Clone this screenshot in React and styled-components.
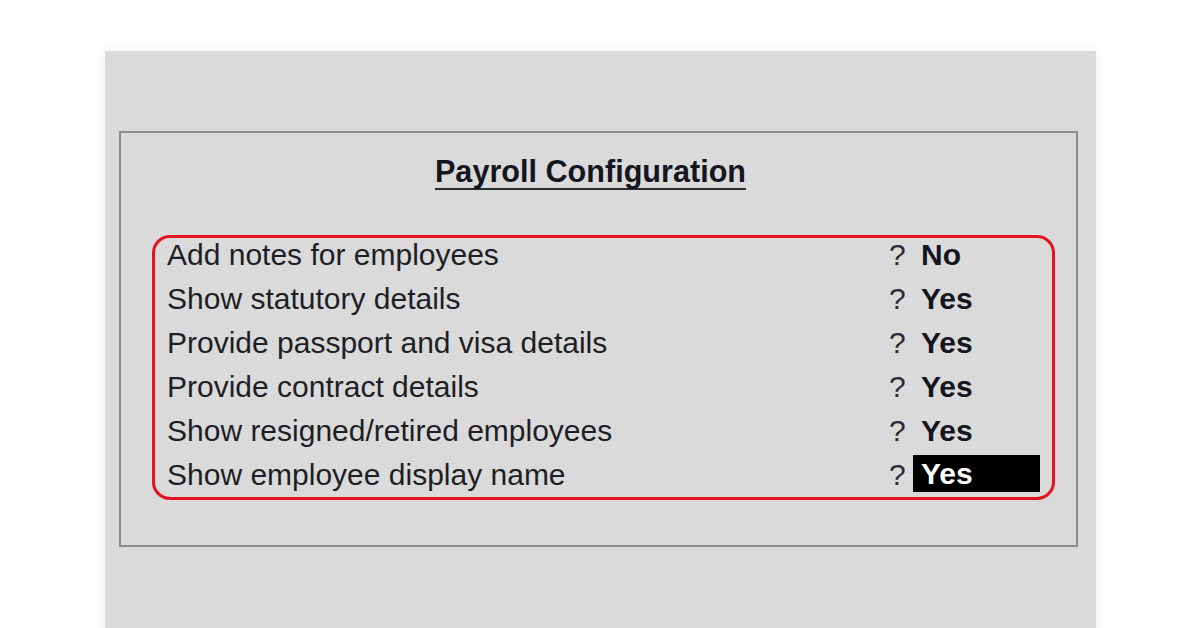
import styled, { createGlobalStyle } from 'styled-components';

const GlobalStyle = createGlobalStyle`
  html, body {
    margin: 0;
    padding: 0;
    background: #ffffff;
    overflow: hidden;
  }

  body {
    font-family: "Liberation Sans", Arial, sans-serif;
  }
`;

const settings = [
  { label: 'Add notes for employees', value: 'No' },
  { label: 'Show statutory details', value: 'Yes' },
  { label: 'Provide passport and visa details', value: 'Yes' },
  { label: 'Provide contract details', value: 'Yes' },
  { label: 'Show resigned/retired employees', value: 'Yes' },
  { label: 'Show employee display name', value: 'Yes', active: true },
];

const App = () => {
  return (
    <>
      <GlobalStyle />
      <Page>
        <Panel>
          <ConfigBox>
            <TitleRow>
              <Title>Payroll Configuration</Title>
            </TitleRow>

            <Highlight>
              {settings.map((item) => (
                <SettingRow key={item.label}>
                  <Label>{item.label}</Label>
                  <Question>?</Question>
                  <Value $active={item.active}>{item.value}</Value>
                </SettingRow>
              ))}
            </Highlight>
          </ConfigBox>
        </Panel>
      </Page>
    </>
  );
};

export default App;

const Page = styled.div`
  width: 1200px;
  height: 628px;
  padding-top: 51px;
  padding-left: 105px;
  box-sizing: border-box;
`;

const Panel = styled.div`
  width: 991px;
  height: 600px;
  box-sizing: border-box;
  padding: 80px 0 0 14px;
  background: #dadada;
  box-shadow: 0 0 12px rgba(0, 0, 0, 0.08);
`;

const ConfigBox = styled.div`
  width: 959px;
  height: 416px;
  box-sizing: border-box;
  border: 2px solid #8b8b8b;
  padding: 21px 21px 0 31px;
`;

const TitleRow = styled.div`
  display: flex;
  justify-content: center;
  padding-right: 26px;
`;

const Title = styled.h1`
  margin: 0;
  font-size: 30.6px;
  font-weight: 700;
  line-height: 34px;
  color: #15151f;
  text-decoration: underline;
  text-decoration-thickness: 2px;
  text-underline-offset: 6px;
  text-decoration-color: #2a2a2a;
`;

const Highlight = styled.div`
  margin-top: 47px;
  border: 3px solid #e3141e;
  border-radius: 18px;
  padding: 2px 12px 7px 12px;
  display: flex;
  flex-direction: column;
  gap: 14px;
`;

const SettingRow = styled.div`
  display: grid;
  grid-template-columns: 1fr 24px 127px;
  align-items: center;
  height: 30px;
  font-size: 30px;
  line-height: 30px;
  color: #1e1e26;
`;

const Label = styled.span`
  white-space: nowrap;
`;

const Question = styled.span`
  color: #2a2a34;
`;

const Value = styled.span`
  font-weight: 700;
  padding-left: 8px;
  height: ${({ $active }) => ($active ? '37px' : '30px')};
  line-height: ${({ $active }) => ($active ? '37px' : '30px')};
  margin: ${({ $active }) => ($active ? '-5px 0 -2px' : '0')};
  background: ${({ $active }) => ($active ? '#000000' : 'transparent')};
  color: ${({ $active }) => ($active ? '#ffffff' : '#15151f')};
`;
